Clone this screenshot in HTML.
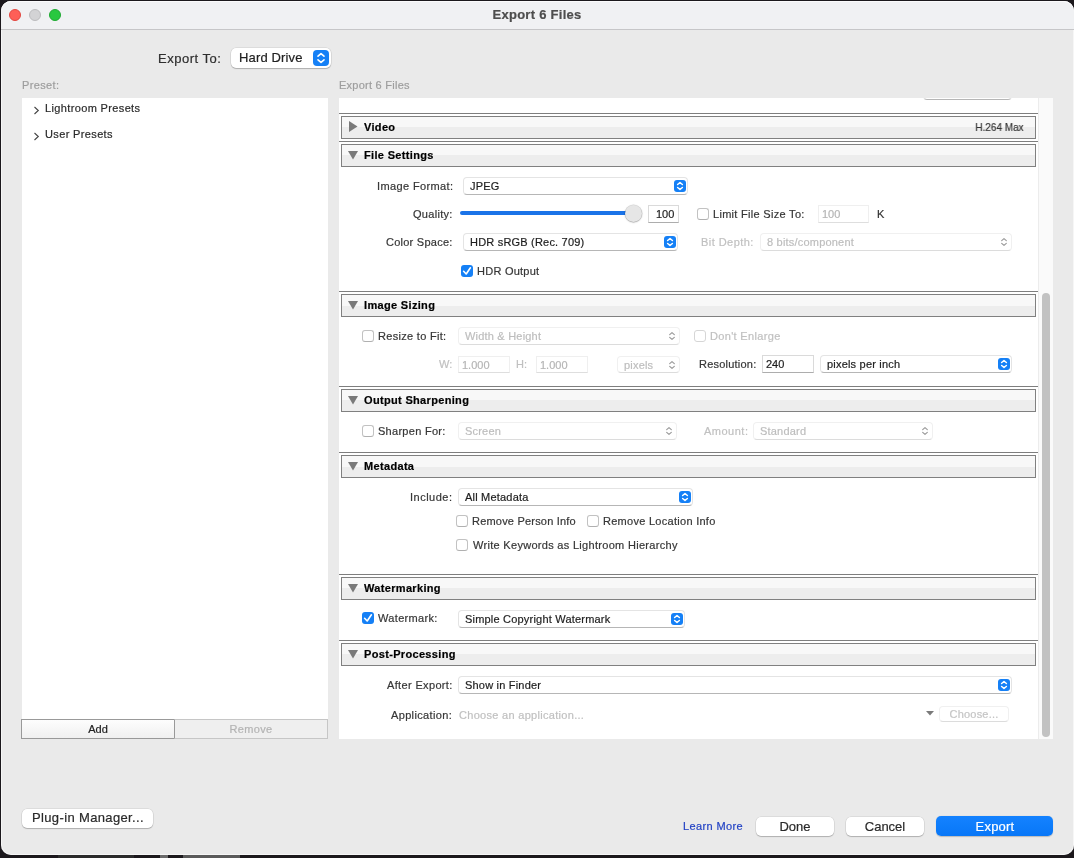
<!DOCTYPE html><html><head><meta charset="utf-8"><style>
html,body{margin:0;padding:0;}
body{width:1074px;height:858px;overflow:hidden;background:#1b181c;position:relative;font-family:"Liberation Sans", sans-serif;}
.t{position:absolute;white-space:nowrap;will-change:transform;-webkit-text-stroke:0.2px currentColor;}
.b{position:absolute;box-sizing:border-box;}
.win{position:absolute;left:1px;top:1px;width:1073px;height:854px;border-radius:10px;background:#eaeaea;overflow:hidden;box-shadow:inset 0 0 0 1px rgba(255,255,255,0.55);}
.pop{background:#fff;border-radius:4px;border:1px solid #e4e4e4;border-bottom-color:#b6b6b6;}
.pop.dis{border-color:#f0f0f0;border-bottom-color:#dcdcdc;}
.stp{background:#1580f6;border-radius:3px;}
.stp svg{display:block;}
.cbx{width:12px;height:12px;border-radius:3px;background:#fff;border:1px solid #c2c2c2;border-bottom-color:#b0b0b0;}
.cbx.dis{border-color:#d6d6d6;}
.cbx.on{background:#1580f6;border:none;}
.cbx svg{display:block;}
.fld{background:#fff;border:1px solid #dadada;border-bottom-color:#adadad;}
.fld.dis{border-color:#efefef;border-bottom-color:#dedede;}
.btn{background:#fff;border-radius:5px;box-shadow:0 0 0 0.5px rgba(0,0,0,0.12),0 1px 1px rgba(0,0,0,0.2);}

</style></head><body>
<div class="win">
</div>
<div class="b" style="left:1px;top:1px;width:1073px;height:28px;background:#f0f1f3;border-radius:10px 10px 0 0;box-shadow:inset 0 1px 0 rgba(255,255,255,0.7);"></div>
<div class="b" style="left:1px;top:29px;width:1073px;height:1px;background:#c6c6c8;"></div>
<div class="b" style="left:9px;top:9px;width:12px;height:12px;border-radius:50%;background:#fe5f57;border:0.5px solid #e2463f;"></div>
<div class="b" style="left:29px;top:9px;width:12px;height:12px;border-radius:50%;background:#d3d3d5;border:0.5px solid #bcbcbe;"></div>
<div class="b" style="left:49px;top:9px;width:12px;height:12px;border-radius:50%;background:#29c840;border:0.5px solid #1ea932;"></div>
<div class="t" style="left:237.29999999999995px;width:600px;top:6.50px;font-size:13px;line-height:16px;font-weight:700;color:#4d4d4d;text-align:center;letter-spacing:0.27px;">Export 6 Files</div>
<div class="t" style="right:853px;top:50.50px;font-size:13px;line-height:16px;font-weight:400;color:#2e2e2e;text-align:right;letter-spacing:0.5px;">Export To:</div>
<div class="b btn" style="left:231px;top:48px;width:100px;height:20px;"></div>
<div class="t" style="left:239px;top:49.80px;font-size:13px;line-height:16px;font-weight:400;color:#222;letter-spacing:0.15px;">Hard Drive</div>
<div class="b stp" style="left:313px;top:50px;width:16px;height:16px;border-radius:4px;"><svg width="16" height="16" viewBox="0 0 16 16"><path d="M5 6.2 L8 3.6 L11 6.2 M5 9.8 L8 12.4 L11 9.8" fill="none" stroke="#fff" stroke-width="1.6" stroke-linecap="round" stroke-linejoin="round"/></svg></div>
<div class="t" style="left:21.5px;top:78.19px;font-size:11px;line-height:14px;font-weight:400;color:#9d9d9d;letter-spacing:0.35px;">Preset:</div>
<div class="t" style="left:338.5px;top:78.19px;font-size:11px;line-height:14px;font-weight:400;color:#9d9d9d;letter-spacing:0.25px;">Export 6 Files</div>
<div class="b" style="left:22px;top:98px;width:306px;height:621px;background:#fff;"></div>
<svg class="b" style="left:33px;top:106px" width="7" height="9" viewBox="0 0 7 9"><path d="M1.5 1 L5.3 4.5 L1.5 8" fill="none" stroke="#444" stroke-width="1.1"/></svg>
<div class="t" style="left:44.5px;top:101.19px;font-size:11px;line-height:14px;font-weight:400;color:#2a2a2a;letter-spacing:0.36px;">Lightroom Presets</div>
<svg class="b" style="left:33px;top:132px" width="7" height="9" viewBox="0 0 7 9"><path d="M1.5 1 L5.3 4.5 L1.5 8" fill="none" stroke="#444" stroke-width="1.1"/></svg>
<div class="t" style="left:44.5px;top:127.19px;font-size:11px;line-height:14px;font-weight:400;color:#2a2a2a;letter-spacing:0.36px;">User Presets</div>
<div class="b" style="left:21px;top:719px;width:154px;height:20px;border:1px solid #999;background:linear-gradient(#fdfdfd,#f0f0f0);"></div>
<div class="b" style="left:174px;top:719px;width:154px;height:20px;border:1px solid #c6c6c6;border-left:1px solid #999;background:#efefef;"></div>
<div class="t" style="left:-202px;width:600px;top:722.19px;font-size:11px;line-height:14px;font-weight:400;color:#222;text-align:center;">Add</div>
<div class="t" style="left:-49px;width:600px;top:722.19px;font-size:11px;line-height:14px;font-weight:400;color:#b3b3b3;text-align:center;letter-spacing:0.3px;">Remove</div>
<div class="b" style="left:339px;top:98px;width:714px;height:641px;background:#fff;"></div>
<div class="b" style="left:1038px;top:98px;width:15px;height:641px;background:#fafafa;border-left:1px solid #ececec;"></div>
<div class="b" style="left:1042px;top:293px;width:8px;height:444px;background:#c2c2c2;border-radius:4px;"></div>
<div class="b" style="left:900px;top:98px;width:130px;height:4px;overflow:hidden;"><div class="b pop" style="left:23px;top:-16px;width:89px;height:18px;"></div></div>
<div class="b" style="left:339px;top:113px;width:699px;height:1px;background:#7e7e7e;"></div>
<div class="b" style="left:341px;top:116px;width:695px;height:23px;border:1px solid #808080;box-sizing:border-box;background:linear-gradient(#f8f8f8 0,#f8f8f8 50%,#ededed 50%,#ededed 100%);"></div>
<svg class="b" style="left:349px;top:121px" width="9" height="11" viewBox="0 0 9 11"><path d="M0 0 L8.5 5.5 L0 11 Z" fill="#7a7a7a"/></svg>
<div class="t" style="left:364px;top:120.19px;font-size:11px;line-height:14px;font-weight:700;color:#000;letter-spacing:0.33px;">Video</div>
<div class="t" style="right:50px;top:120.19px;font-size:11px;line-height:14px;font-weight:400;color:#333;text-align:right;letter-spacing:0.05px;transform:scaleX(0.9);transform-origin:right center;">H.264 Max</div>
<div class="b" style="left:339px;top:141px;width:699px;height:1px;background:#7e7e7e;"></div>
<div class="b" style="left:341px;top:144px;width:695px;height:23px;border:1px solid #808080;box-sizing:border-box;background:linear-gradient(#f8f8f8 0,#f8f8f8 50%,#ededed 50%,#ededed 100%);"></div>
<svg class="b" style="left:348px;top:151px" width="10" height="9" viewBox="0 0 10 9"><path d="M0 0 L10 0 L5 8.5 Z" fill="#7a7a7a"/></svg>
<div class="t" style="left:364px;top:148.19px;font-size:11px;line-height:14px;font-weight:700;color:#000;letter-spacing:0.33px;">File Settings</div>
<div class="t" style="right:621px;top:179.19px;font-size:11px;line-height:14px;font-weight:400;color:#363636;text-align:right;letter-spacing:0.38px;">Image Format:</div>
<div class="b pop" style="left:463px;top:177px;width:225px;height:18px;"></div>
<div class="t" style="left:470px;top:179.19px;font-size:11px;line-height:14px;font-weight:400;color:#1e1e1e;letter-spacing:0.2px;">JPEG</div>
<div class="b stp" style="left:674px;top:180px;width:12px;height:12px;"><svg width="12" height="12" viewBox="0 0 12 12"><path d="M3.6 4.5 L6 2.6 L8.4 4.5 M3.6 7.5 L6 9.4 L8.4 7.5" fill="none" stroke="#fff" stroke-width="1.45" stroke-linecap="round" stroke-linejoin="round"/></svg></div>
<div class="t" style="right:621px;top:207.19px;font-size:11px;line-height:14px;font-weight:400;color:#363636;text-align:right;letter-spacing:0.3px;">Quality:</div>
<div class="b" style="left:460px;top:211px;width:174px;height:4px;background:#1a73e8;border-radius:2px;"></div>
<div class="b" style="left:625px;top:205px;width:17px;height:17px;border-radius:50%;background:#e6e6e6;box-shadow:0 0 0 0.5px rgba(0,0,0,0.12),0 0.5px 1.5px rgba(0,0,0,0.35);"></div>
<div class="b fld" style="left:648px;top:205px;width:31px;height:18px;"></div>
<div class="t" style="right:400px;top:207.19px;font-size:11px;line-height:14px;font-weight:400;color:#1e1e1e;text-align:right;">100</div>
<div class="b cbx" style="left:697px;top:208px;"></div>
<div class="t" style="left:712.5px;top:207.19px;font-size:11px;line-height:14px;font-weight:400;color:#363636;letter-spacing:0.3px;">Limit File Size To:</div>
<div class="b fld dis" style="left:818px;top:205px;width:51px;height:18px;"></div>
<div class="t" style="left:822px;top:207.19px;font-size:11px;line-height:14px;font-weight:400;color:#b5b5b5;">100</div>
<div class="t" style="left:877px;top:207.19px;font-size:11px;line-height:14px;font-weight:400;color:#333;">K</div>
<div class="t" style="right:621px;top:235.19px;font-size:11px;line-height:14px;font-weight:400;color:#363636;text-align:right;letter-spacing:0.25px;">Color Space:</div>
<div class="b pop" style="left:463px;top:233px;width:215px;height:18px;"></div>
<div class="t" style="left:470px;top:235.19px;font-size:11px;line-height:14px;font-weight:400;color:#1e1e1e;letter-spacing:0.2px;">HDR sRGB (Rec. 709)</div>
<div class="b stp" style="left:664px;top:236px;width:12px;height:12px;"><svg width="12" height="12" viewBox="0 0 12 12"><path d="M3.6 4.5 L6 2.6 L8.4 4.5 M3.6 7.5 L6 9.4 L8.4 7.5" fill="none" stroke="#fff" stroke-width="1.45" stroke-linecap="round" stroke-linejoin="round"/></svg></div>
<div class="t" style="left:700.5px;top:235.19px;font-size:11px;line-height:14px;font-weight:400;color:#c0c0c0;letter-spacing:0.45px;">Bit Depth:</div>
<div class="b pop dis" style="left:760px;top:233px;width:252px;height:18px;"></div>
<div class="t" style="left:767px;top:235.19px;font-size:11px;line-height:14px;font-weight:400;color:#bdbdbd;letter-spacing:0.2px;">8 bits/component</div>
<svg class="b" style="left:1000px;top:237px" width="8" height="10" viewBox="0 0 8 10"><path d="M1.7 3.6 L4 1.6 L6.3 3.6 M1.7 6.4 L4 8.4 L6.3 6.4" fill="none" stroke="#9a9a9a" stroke-width="1.2" stroke-linecap="round" stroke-linejoin="round"/></svg>
<div class="b cbx on" style="left:461px;top:265px;"><svg width="12" height="12" viewBox="0 0 12 12"><path d="M2.6 6.3 L5.2 9.0 L9.4 2.8" fill="none" stroke="#fff" stroke-width="1.6" stroke-linecap="round" stroke-linejoin="round"/></svg></div>
<div class="t" style="left:477px;top:264.19px;font-size:11px;line-height:14px;font-weight:400;color:#363636;letter-spacing:0.25px;">HDR Output</div>
<div class="b" style="left:339px;top:291px;width:699px;height:1px;background:#7e7e7e;"></div>
<div class="b" style="left:341px;top:294px;width:695px;height:23px;border:1px solid #808080;box-sizing:border-box;background:linear-gradient(#f8f8f8 0,#f8f8f8 50%,#ededed 50%,#ededed 100%);"></div>
<svg class="b" style="left:348px;top:301px" width="10" height="9" viewBox="0 0 10 9"><path d="M0 0 L10 0 L5 8.5 Z" fill="#7a7a7a"/></svg>
<div class="t" style="left:364px;top:298.19px;font-size:11px;line-height:14px;font-weight:700;color:#000;letter-spacing:0.33px;">Image Sizing</div>
<div class="b cbx" style="left:362px;top:330px;"></div>
<div class="t" style="left:377.5px;top:329.19px;font-size:11px;line-height:14px;font-weight:400;color:#363636;letter-spacing:0.3px;">Resize to Fit:</div>
<div class="b pop dis" style="left:458px;top:327px;width:222px;height:18px;"></div>
<div class="t" style="left:465px;top:329.19px;font-size:11px;line-height:14px;font-weight:400;color:#bdbdbd;letter-spacing:0.2px;">Width &amp; Height</div>
<svg class="b" style="left:668px;top:331px" width="8" height="10" viewBox="0 0 8 10"><path d="M1.7 3.6 L4 1.6 L6.3 3.6 M1.7 6.4 L4 8.4 L6.3 6.4" fill="none" stroke="#9a9a9a" stroke-width="1.2" stroke-linecap="round" stroke-linejoin="round"/></svg>
<div class="b cbx dis" style="left:694px;top:330px;"></div>
<div class="t" style="left:710px;top:329.19px;font-size:11px;line-height:14px;font-weight:400;color:#c0c0c0;letter-spacing:0.33px;">Don't Enlarge</div>
<div class="t" style="right:621.5px;top:357.19px;font-size:11px;line-height:14px;font-weight:400;color:#c0c0c0;text-align:right;">W:</div>
<div class="b fld dis" style="left:458px;top:356px;width:52px;height:17px;"></div>
<div class="t" style="left:462px;top:358.19px;font-size:11px;line-height:14px;font-weight:400;color:#b5b5b5;">1.000</div>
<div class="t" style="right:547px;top:357.19px;font-size:11px;line-height:14px;font-weight:400;color:#c0c0c0;text-align:right;">H:</div>
<div class="b fld dis" style="left:536px;top:356px;width:52px;height:17px;"></div>
<div class="t" style="left:540px;top:358.19px;font-size:11px;line-height:14px;font-weight:400;color:#b5b5b5;">1.000</div>
<div class="b pop dis" style="left:617px;top:356px;width:63px;height:17px;"></div>
<div class="t" style="left:624px;top:358.19px;font-size:11px;line-height:14px;font-weight:400;color:#bdbdbd;letter-spacing:0.2px;">pixels</div>
<svg class="b" style="left:668px;top:360px" width="8" height="10" viewBox="0 0 8 10"><path d="M1.7 3.6 L4 1.6 L6.3 3.6 M1.7 6.4 L4 8.4 L6.3 6.4" fill="none" stroke="#9a9a9a" stroke-width="1.2" stroke-linecap="round" stroke-linejoin="round"/></svg>
<div class="t" style="right:318px;top:357.19px;font-size:11px;line-height:14px;font-weight:400;color:#363636;text-align:right;letter-spacing:0.22px;">Resolution:</div>
<div class="b fld" style="left:762px;top:355px;width:52px;height:18px;"></div>
<div class="t" style="left:766px;top:357.19px;font-size:11px;line-height:14px;font-weight:400;color:#1e1e1e;">240</div>
<div class="b pop" style="left:820px;top:355px;width:192px;height:18px;"></div>
<div class="t" style="left:827px;top:357.19px;font-size:11px;line-height:14px;font-weight:400;color:#1e1e1e;letter-spacing:0.2px;">pixels per inch</div>
<div class="b stp" style="left:998px;top:358px;width:12px;height:12px;"><svg width="12" height="12" viewBox="0 0 12 12"><path d="M3.6 4.5 L6 2.6 L8.4 4.5 M3.6 7.5 L6 9.4 L8.4 7.5" fill="none" stroke="#fff" stroke-width="1.45" stroke-linecap="round" stroke-linejoin="round"/></svg></div>
<div class="b" style="left:339px;top:386px;width:699px;height:1px;background:#7e7e7e;"></div>
<div class="b" style="left:341px;top:389px;width:695px;height:23px;border:1px solid #808080;box-sizing:border-box;background:linear-gradient(#f8f8f8 0,#f8f8f8 50%,#ededed 50%,#ededed 100%);"></div>
<svg class="b" style="left:348px;top:396px" width="10" height="9" viewBox="0 0 10 9"><path d="M0 0 L10 0 L5 8.5 Z" fill="#7a7a7a"/></svg>
<div class="t" style="left:364px;top:393.19px;font-size:11px;line-height:14px;font-weight:700;color:#000;letter-spacing:0.33px;">Output Sharpening</div>
<div class="b cbx" style="left:362px;top:425px;"></div>
<div class="t" style="left:377.5px;top:424.19px;font-size:11px;line-height:14px;font-weight:400;color:#363636;letter-spacing:0.28px;">Sharpen For:</div>
<div class="b pop dis" style="left:458px;top:422px;width:219px;height:18px;"></div>
<div class="t" style="left:465px;top:424.19px;font-size:11px;line-height:14px;font-weight:400;color:#bdbdbd;letter-spacing:0.2px;">Screen</div>
<svg class="b" style="left:665px;top:426px" width="8" height="10" viewBox="0 0 8 10"><path d="M1.7 3.6 L4 1.6 L6.3 3.6 M1.7 6.4 L4 8.4 L6.3 6.4" fill="none" stroke="#9a9a9a" stroke-width="1.2" stroke-linecap="round" stroke-linejoin="round"/></svg>
<div class="t" style="right:326px;top:424.19px;font-size:11px;line-height:14px;font-weight:400;color:#c0c0c0;text-align:right;letter-spacing:0.5px;">Amount:</div>
<div class="b pop dis" style="left:753px;top:422px;width:180px;height:18px;"></div>
<div class="t" style="left:760px;top:424.19px;font-size:11px;line-height:14px;font-weight:400;color:#bdbdbd;letter-spacing:0.2px;">Standard</div>
<svg class="b" style="left:921px;top:426px" width="8" height="10" viewBox="0 0 8 10"><path d="M1.7 3.6 L4 1.6 L6.3 3.6 M1.7 6.4 L4 8.4 L6.3 6.4" fill="none" stroke="#9a9a9a" stroke-width="1.2" stroke-linecap="round" stroke-linejoin="round"/></svg>
<div class="b" style="left:339px;top:452px;width:699px;height:1px;background:#7e7e7e;"></div>
<div class="b" style="left:341px;top:455px;width:695px;height:23px;border:1px solid #808080;box-sizing:border-box;background:linear-gradient(#f8f8f8 0,#f8f8f8 50%,#ededed 50%,#ededed 100%);"></div>
<svg class="b" style="left:348px;top:462px" width="10" height="9" viewBox="0 0 10 9"><path d="M0 0 L10 0 L5 8.5 Z" fill="#7a7a7a"/></svg>
<div class="t" style="left:364px;top:459.19px;font-size:11px;line-height:14px;font-weight:700;color:#000;letter-spacing:0.33px;">Metadata</div>
<div class="t" style="right:621.5px;top:490.19px;font-size:11px;line-height:14px;font-weight:400;color:#363636;text-align:right;letter-spacing:0.5px;">Include:</div>
<div class="b pop" style="left:458px;top:488px;width:235px;height:18px;"></div>
<div class="t" style="left:465px;top:490.19px;font-size:11px;line-height:14px;font-weight:400;color:#1e1e1e;letter-spacing:0.2px;">All Metadata</div>
<div class="b stp" style="left:679px;top:491px;width:12px;height:12px;"><svg width="12" height="12" viewBox="0 0 12 12"><path d="M3.6 4.5 L6 2.6 L8.4 4.5 M3.6 7.5 L6 9.4 L8.4 7.5" fill="none" stroke="#fff" stroke-width="1.45" stroke-linecap="round" stroke-linejoin="round"/></svg></div>
<div class="b cbx" style="left:456px;top:515px;"></div>
<div class="t" style="left:471.5px;top:514.19px;font-size:11px;line-height:14px;font-weight:400;color:#363636;letter-spacing:0.2px;">Remove Person Info</div>
<div class="b cbx" style="left:587px;top:515px;"></div>
<div class="t" style="left:602.5px;top:514.19px;font-size:11px;line-height:14px;font-weight:400;color:#363636;letter-spacing:0.28px;">Remove Location Info</div>
<div class="b cbx" style="left:456px;top:539px;"></div>
<div class="t" style="left:472.5px;top:538.19px;font-size:11px;line-height:14px;font-weight:400;color:#363636;letter-spacing:0.3px;">Write Keywords as Lightroom Hierarchy</div>
<div class="b" style="left:339px;top:574px;width:699px;height:1px;background:#7e7e7e;"></div>
<div class="b" style="left:341px;top:577px;width:695px;height:23px;border:1px solid #808080;box-sizing:border-box;background:linear-gradient(#f8f8f8 0,#f8f8f8 50%,#ededed 50%,#ededed 100%);"></div>
<svg class="b" style="left:348px;top:584px" width="10" height="9" viewBox="0 0 10 9"><path d="M0 0 L10 0 L5 8.5 Z" fill="#7a7a7a"/></svg>
<div class="t" style="left:364px;top:581.19px;font-size:11px;line-height:14px;font-weight:700;color:#000;letter-spacing:0.33px;">Watermarking</div>
<div class="b cbx on" style="left:362px;top:612px;"><svg width="12" height="12" viewBox="0 0 12 12"><path d="M2.6 6.3 L5.2 9.0 L9.4 2.8" fill="none" stroke="#fff" stroke-width="1.6" stroke-linecap="round" stroke-linejoin="round"/></svg></div>
<div class="t" style="left:378px;top:611.19px;font-size:11px;line-height:14px;font-weight:400;color:#363636;letter-spacing:0.33px;">Watermark:</div>
<div class="b pop" style="left:458px;top:610px;width:227px;height:18px;"></div>
<div class="t" style="left:465px;top:612.19px;font-size:11px;line-height:14px;font-weight:400;color:#1e1e1e;letter-spacing:0.2px;">Simple Copyright Watermark</div>
<div class="b stp" style="left:671px;top:613px;width:12px;height:12px;"><svg width="12" height="12" viewBox="0 0 12 12"><path d="M3.6 4.5 L6 2.6 L8.4 4.5 M3.6 7.5 L6 9.4 L8.4 7.5" fill="none" stroke="#fff" stroke-width="1.45" stroke-linecap="round" stroke-linejoin="round"/></svg></div>
<div class="b" style="left:339px;top:640px;width:699px;height:1px;background:#7e7e7e;"></div>
<div class="b" style="left:341px;top:643px;width:695px;height:23px;border:1px solid #808080;box-sizing:border-box;background:linear-gradient(#f8f8f8 0,#f8f8f8 50%,#ededed 50%,#ededed 100%);"></div>
<svg class="b" style="left:348px;top:650px" width="10" height="9" viewBox="0 0 10 9"><path d="M0 0 L10 0 L5 8.5 Z" fill="#7a7a7a"/></svg>
<div class="t" style="left:364px;top:647.19px;font-size:11px;line-height:14px;font-weight:700;color:#000;letter-spacing:0.33px;">Post-Processing</div>
<div class="t" style="right:621px;top:678.19px;font-size:11px;line-height:14px;font-weight:400;color:#363636;text-align:right;letter-spacing:0.35px;">After Export:</div>
<div class="b pop" style="left:458px;top:676px;width:554px;height:18px;"></div>
<div class="t" style="left:465px;top:678.19px;font-size:11px;line-height:14px;font-weight:400;color:#1e1e1e;letter-spacing:0.2px;">Show in Finder</div>
<div class="b stp" style="left:998px;top:679px;width:12px;height:12px;"><svg width="12" height="12" viewBox="0 0 12 12"><path d="M3.6 4.5 L6 2.6 L8.4 4.5 M3.6 7.5 L6 9.4 L8.4 7.5" fill="none" stroke="#fff" stroke-width="1.45" stroke-linecap="round" stroke-linejoin="round"/></svg></div>
<div class="t" style="right:621.5px;top:708.19px;font-size:11px;line-height:14px;font-weight:400;color:#363636;text-align:right;letter-spacing:0.35px;">Application:</div>
<div class="t" style="left:459px;top:708.19px;font-size:11px;line-height:14px;font-weight:400;color:#c0c0c0;letter-spacing:0.3px;">Choose an application...</div>
<svg class="b" style="left:926px;top:711px" width="8" height="5" viewBox="0 0 8 5"><path d="M0 0 L8 0 L4 4.6 Z" fill="#7a7a7a"/></svg>
<div class="b pop dis" style="left:939px;top:706px;width:70px;height:16px;"></div>
<div class="t" style="left:674px;width:600px;top:707.19px;font-size:11px;line-height:14px;font-weight:400;color:#c4c4c4;text-align:center;letter-spacing:0.2px;">Choose...</div>
<div class="b btn" style="left:22px;top:809px;width:131px;height:19px;"></div>
<div class="t" style="left:-212.5px;width:600px;top:809.90px;font-size:13px;line-height:16px;font-weight:400;color:#2a2a2a;text-align:center;letter-spacing:0.36px;">Plug-in Manager...</div>
<div class="t" style="left:412.5px;width:600px;top:819.19px;font-size:11px;line-height:14px;font-weight:400;color:#2343c4;text-align:center;letter-spacing:0.38px;">Learn More</div>
<div class="b btn" style="left:756px;top:817px;width:78px;height:19px;"></div>
<div class="t" style="left:495px;width:600px;top:818.50px;font-size:13px;line-height:16px;font-weight:400;color:#2a2a2a;text-align:center;">Done</div>
<div class="b btn" style="left:846px;top:817px;width:78px;height:19px;"></div>
<div class="t" style="left:585px;width:600px;top:818.50px;font-size:13px;line-height:16px;font-weight:400;color:#2a2a2a;text-align:center;">Cancel</div>
<div class="b" style="left:936px;top:816px;width:117px;height:20px;border-radius:5px;background:linear-gradient(#1482ff,#0877f7);box-shadow:0 0.5px 1px rgba(0,0,0,0.2);"></div>
<div class="t" style="left:694.5px;width:600px;top:818.50px;font-size:13px;line-height:16px;font-weight:400;color:#fff;text-align:center;letter-spacing:0.2px;">Export</div>
<div class="b" style="left:58px;top:855px;width:76px;height:3px;background:#2b2b2b;"></div>
<div class="b" style="left:160px;top:855px;width:8px;height:3px;background:#6a6a6a;"></div>
<div class="b" style="left:183px;top:855px;width:57px;height:3px;background:#5a5a5a;"></div>
</body></html>
